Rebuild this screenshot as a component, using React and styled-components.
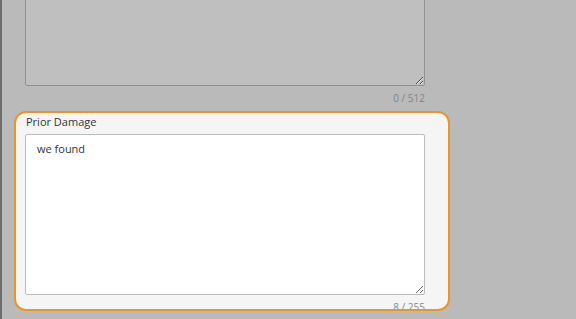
import React from "react";
import styled, { createGlobalStyle } from "styled-components";

const GlobalStyle = createGlobalStyle`
  html, body {
    margin: 0;
    padding: 0;
    background: #bababa;
    font-family: "Open Sans", "Liberation Sans", sans-serif;
    overflow: hidden;
  }
`;

const Page = styled.div`
  display: flex;
  flex-direction: column;
  width: 576px;
  height: 319px;
  box-sizing: border-box;
  border-left: 2px solid #6d6d6d;
  padding-left: 12px;
  overflow: hidden;
`;

const Field = styled.div`
  display: flex;
  flex-direction: column;
  width: 436px;
  box-sizing: border-box;
  padding: 0 23px 0 11px;
  margin-top: ${(props) => props.offset || 0}px;
`;

const Card = styled.div`
  display: flex;
  flex-direction: column;
  flex-shrink: 0;
  width: 436px;
  height: 200px;
  box-sizing: border-box;
  margin-top: 7px;
  padding: 1px 23px 0 9px;
  background: #f5f5f5;
  border: 2px solid #e8962a;
  border-radius: 12px;
  overflow: hidden;
`;

const Label = styled.label`
  font-size: 11px;
  line-height: 15px;
  color: #333333;
  padding-left: 1px;
  margin-bottom: 5px;
`;

const TextArea = styled.textarea`
  display: block;
  flex-shrink: 0;
  width: 400px;
  height: ${(props) => props.h}px;
  box-sizing: border-box;
  margin: 0;
  padding: 6px 11px;
  font-family: "Open Sans", "Liberation Sans", sans-serif;
  font-size: 11px;
  line-height: 15px;
  color: #333333;
  background: ${(props) => (props.dim ? "#bfbfbf" : "#ffffff")};
  border: 1px solid ${(props) => (props.dim ? "#919191" : "#bdbdbd")};
  border-radius: 2px;
  resize: vertical;
  outline: none;
`;

const Counter = styled.div`
  width: 400px;
  flex-shrink: 0;
  text-align: right;
  font-size: 10px;
  line-height: 12px;
  margin-top: ${(props) => props.gap}px;
  color: ${(props) => (props.dim ? "#858585" : "#8a8a8a")};
`;

export default function App() {
  return (
    <>
      <GlobalStyle />
      <Page>
        <Field offset={-30}>
          <TextArea dim h={116} defaultValue="" readOnly />
          <Counter dim gap={6}>0 / 512</Counter>
        </Field>
        <Card>
          <Label>Prior Damage</Label>
          <TextArea h={161} defaultValue="we found" readOnly />
          <Counter gap={6}>8 / 255</Counter>
        </Card>
      </Page>
    </>
  );
}
